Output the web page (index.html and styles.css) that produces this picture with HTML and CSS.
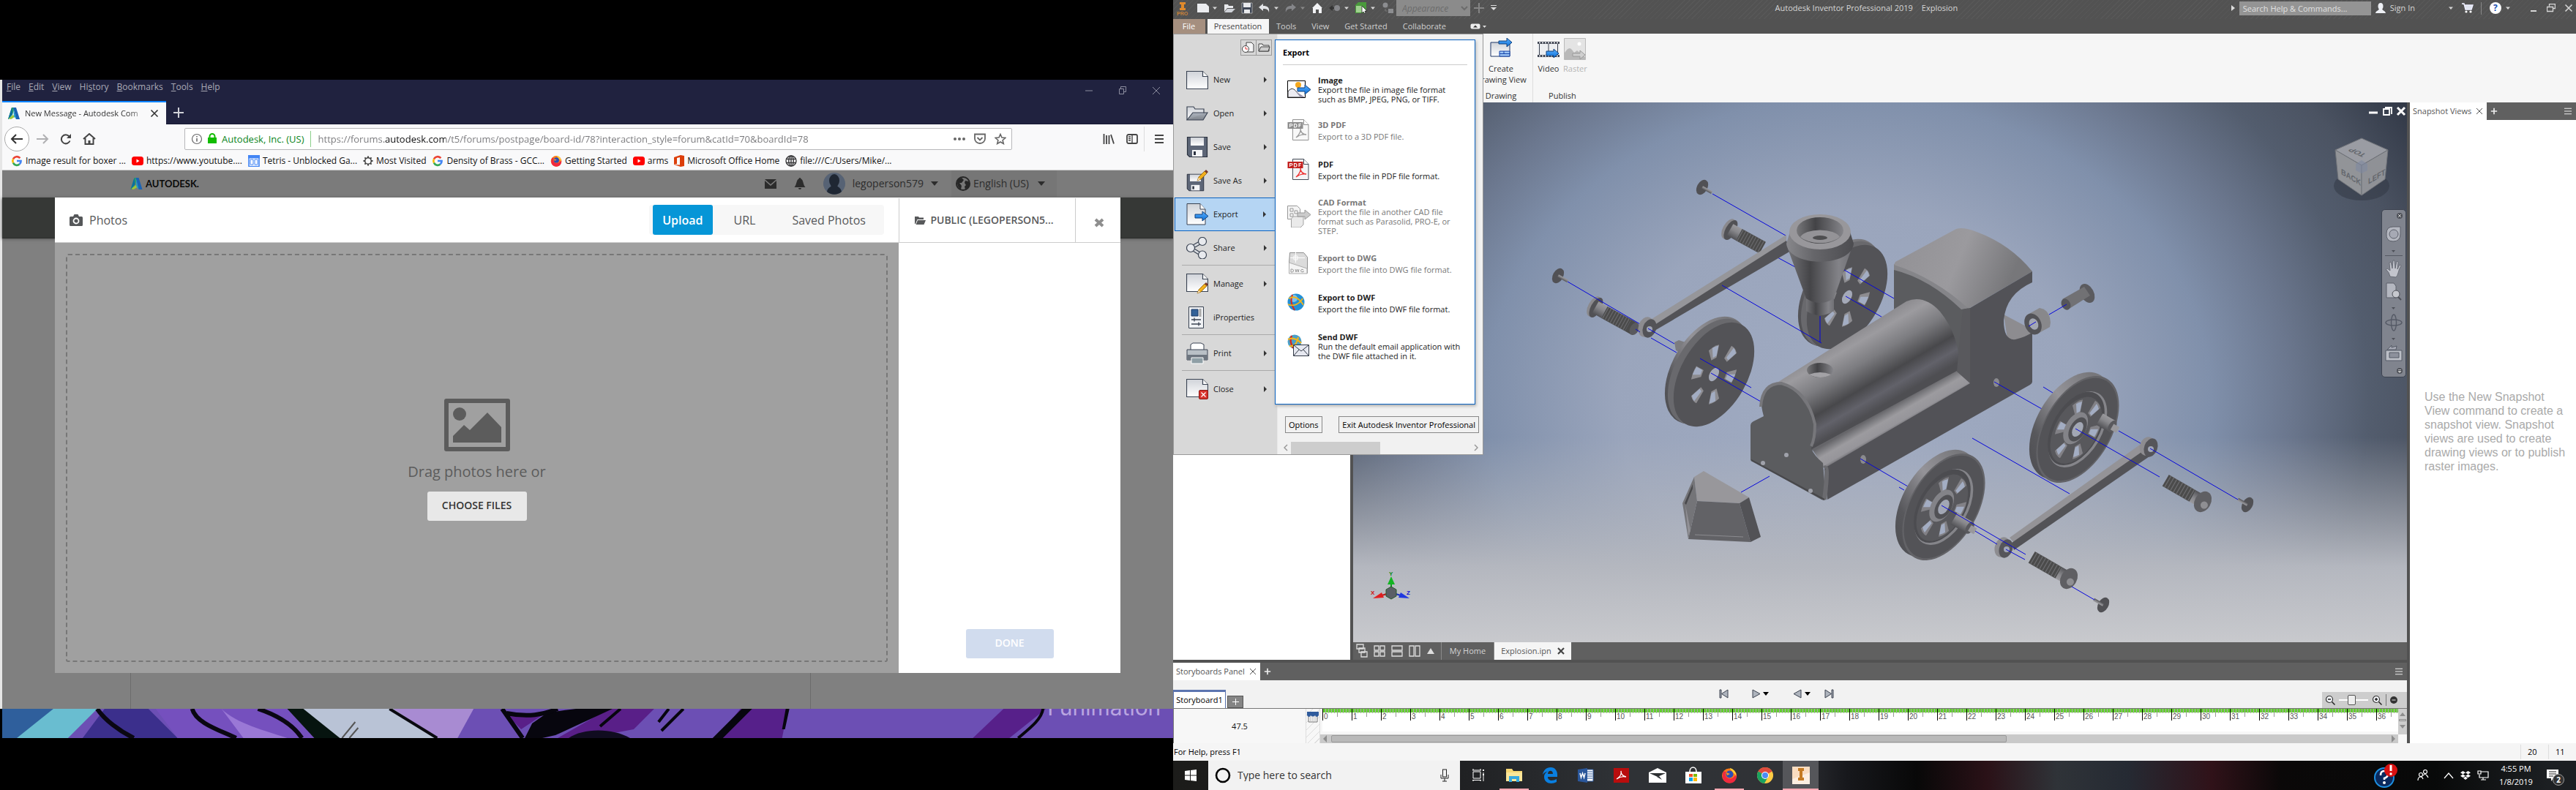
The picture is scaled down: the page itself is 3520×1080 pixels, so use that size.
FILE: index.html
```html
<!DOCTYPE html>
<html lang="en">
<head>
<meta charset="utf-8">
<title>Desktop</title>
<link rel="stylesheet" href="styles.css">
</head>
<body>
<svg class="defs" aria-hidden="true">
  <defs>
    <linearGradient id="paper" x1="0" y1="0" x2="0" y2="1"><stop offset="0" stop-color="#d0d3d9"/><stop offset="1" stop-color="#fff"/></linearGradient>
    <linearGradient id="steel" x1="0" y1="0" x2="0" y2="1"><stop offset="0" stop-color="#8e98a5"/><stop offset="1" stop-color="#4e5663"/></linearGradient>
    <linearGradient id="arrowblue" x1="0" y1="0" x2="0" y2="1"><stop offset="0" stop-color="#5bb0ff"/><stop offset="1" stop-color="#0a6fd8"/></linearGradient>
  </defs>
  <symbol id="a-logo" viewBox="0 0 16 16"><path d="M5 0h4l-3 10L1 16H0z" fill="#2a9a6a"/><path d="M0 16l5-16 1 9z" fill="#0a6f9f"/><path d="M1 15l6-5 2 3-5 3z" fill="#9cc63b"/><path d="M7 0h4l5 16h-5z" fill="#1a63b5"/><path d="M7 0l4 16-3-4z" fill="#17a2c9"/></symbol>
  <symbol id="g-logo" viewBox="0 0 16 16"><g fill="none" stroke-width="2.6"><path d="M12.4 4.2A5.6 5.6 0 0 0 3 5.4" stroke="#ea4335"/><path d="M3 5.3a5.6 5.6 0 0 0 0 5.4" stroke="#fbbc05"/><path d="M3 10.6a5.6 5.6 0 0 0 8.6 2" stroke="#34a853"/><path d="M11.5 12.6A5.6 5.6 0 0 0 13.6 8H8" stroke="#4285f4"/></g></symbol>
  <symbol id="yt" viewBox="0 0 16 16"><rect y="2" width="16" height="12" rx="3.5" fill="#f00"/><path d="M6.5 5.5v5l4-2.5z" fill="#fff"/></symbol>
  <symbol id="fox" viewBox="0 0 22 22"><circle cx="11" cy="11.500" r="10" fill="#ff7a18"/><path d="M3 6c-3 6-1 15 8 15.500s11-8 9.500-13C19 12 15 17 10 15c-5-2-5-7-3-9-2 0-3-1-4 0z" fill="#f0293f"/><circle cx="11.500" cy="9.500" r="5" fill="#2b4fb5"/><path d="M12 1c4 1 9 5 8.500 12C19 8 16 8 15 5c-1-1-3-2-3-4z" fill="#ffd43a"/><path d="M7 7l5 2-4 2z" fill="#ff9a1f"/></symbol>
  <symbol id="globe" viewBox="0 0 16 16"><g fill="none" stroke="#3a3a3c" stroke-width="1.4"><circle cx="8" cy="8" r="7"/><ellipse cx="8" cy="8" rx="3.300" ry="7"/><path d="M1.500 5.500h13M1.500 10.500h13M8 1v14"/></g></symbol>
  <symbol id="caret" viewBox="0 0 8 8"><path d="M1 2.500h6L4 6z" fill="currentColor"/></symbol>
  <symbol id="doc" viewBox="0 0 30 30"><path d="M0.500 3.500h22l7 7v17h-29z" fill="url(#paper)" stroke="#3a4352" stroke-width="1.200"/><path d="M22.500 3.500v7h7" fill="#fff" stroke="#3a4352" stroke-width="1.200"/></symbol>
  <symbol id="pagearrow" viewBox="0 0 30 30"><path d="M1 .5h18l7 7.500v21H1z" fill="url(#paper)" stroke="#3a4352"/><path d="M19 .5V8h7" fill="#fff" stroke="#3a4352"/><path d="M12 15h10v-4l8 6.500-8 6.500v-4H12z" fill="url(#arrowblue)" stroke="#10407c"/></symbol>
  <symbol id="folder" viewBox="0 0 30 30"><path d="M1 24V6h9l2 3h12v6" fill="url(#paper)" stroke="#3a4352" stroke-width="1.200"/><path d="M1 24l8-10h20l-6 10z" fill="url(#steel)" fill-opacity=".65" stroke="#3a4352" stroke-width="1.200"/></symbol>
  <symbol id="floppy" viewBox="0 0 30 30"><path d="M1.500 1.500h27v27h-24l-3-3z" fill="#5d6677" stroke="#2c3340" stroke-width="1.200"/><path d="M6 2h18v11H6z" fill="url(#paper)"/><path d="M8 19h14v9H8z" fill="#f4f5f7"/><path d="M10 21h3v5h-3z" fill="#2c3340"/></symbol>
  <symbol id="pencil" viewBox="0 0 16 16"><path d="M1 15l2-5 8-8 3 3-8 8z" fill="#f2b01e" stroke="#8a5a00" stroke-width=".8"/><path d="M11 2l2-2 3 3-2 2z" fill="#7a3a2a"/><path d="M1 15l2-4 2 2z" fill="#f7e4c8"/></symbol>
  <symbol id="winrestore" viewBox="0 0 12 12"><path d="M3.500 3.500v-3h8v6h-3M.5 4.500h8v6h-8z" fill="none" stroke="currentColor" stroke-width="1.300"/></symbol>
  <symbol id="x" viewBox="0 0 12 12"><path d="M1.500 1.500l9 9M10.500 1.500l-9 9" fill="none" stroke="currentColor" stroke-width="1.600"/></symbol>
  <symbol id="burger" viewBox="0 0 12 12"><path d="M0 1.500h12M0 6h12M0 10.500h12" stroke="currentColor" stroke-width="1.200"/></symbol>
  <symbol id="plus" viewBox="0 0 12 12"><path d="M6 1v10M1 6h10" stroke="currentColor" stroke-width="2"/></symbol>
  <symbol id="pdf" viewBox="0 0 30 30"><path d="M7.500.5h15l6.500 7v21H7.500z" fill="#f4f4f5" stroke="#444c58"/><path d="M22.500.5v7H29" fill="#fff" stroke="#444c58"/><path d="M12 25c4-3 7-9 6-12 0 5 4 8 8 8-5-1-10 1-14 4z" fill="none" stroke="#e33" stroke-width="1.400"/><path d="M.5 4h21v9H.5z" fill="#c3201e"/><path d="M3.500 11V6.500h2q1.500 0 1.500 1.200T5.500 9h-2M9.500 6.500v4.500h1.500q2 0 2-2.200t-2-2.300zM16 11V6.500h3M16 8.700h2.500" fill="none" stroke="#fff" stroke-width="1.100"/></symbol>
</svg>

<main class="desktop">
<section class="screen-left">
  <div class="browser">
    <header class="chrome-top">
      <div class="menurow">
        <nav class="menubar"><a href="#"><u>F</u>ile</a><a href="#"><u>E</u>dit</a><a href="#"><u>V</u>iew</a><a href="#">Hi<u>s</u>tory</a><a href="#"><u>B</u>ookmarks</a><a href="#"><u>T</u>ools</a><a href="#"><u>H</u>elp</a></nav>
        <div class="winbtns">
          <button aria-label="Minimize"><svg width="12" height="12"><path d="M1 6h10" stroke="currentColor"/></svg></button>
          <button aria-label="Restore"><svg width="12" height="12"><path d="M3.500 3V.5h7v7H8M1.500 3.500h6v7h-6z" fill="none" stroke="currentColor"/></svg></button>
          <button aria-label="Close"><svg width="12" height="12"><path d="M1 1l10 10M11 1L1 11" stroke="currentColor"/></svg></button>
        </div>
      </div>
      <div class="tabrow">
        <div class="tab"><svg width="16" height="16"><use href="#a-logo"/></svg><span class="tab-title">New Message - Autodesk Com</span><button aria-label="Close tab"><svg width="12" height="12"><use href="#x"/></svg></button></div>
        <button class="newtab" aria-label="New tab"><svg width="16" height="16"><path d="M8 1v14M1 8h14" stroke="#d0d1d8" stroke-width="2"/></svg></button>
      </div>
    </header>
    <div class="toolbar">
      <button class="back" aria-label="Back"><svg width="18" height="16"><path d="M17 8H2M8 2L2 8l6 6" fill="none" stroke="#333" stroke-width="2"/></svg></button>
      <button aria-label="Forward"><svg width="18" height="16"><path d="M1 8h15M10 2l6 6-6 6" fill="none" stroke="#b0b0b2" stroke-width="2"/></svg></button>
      <button aria-label="Reload"><svg width="16" height="16"><path d="M13.500 10.500a6 6 0 1 1-1-6" fill="none" stroke="#444" stroke-width="2"/><path d="M15 1v6H9z" fill="#444"/></svg></button>
      <button aria-label="Home"><svg width="18" height="16"><path d="M1 8l8-7 8 7M3.500 7v8h11V7" fill="none" stroke="#444" stroke-width="2"/><path d="M7.500 10h3v5h-3z" fill="#444"/></svg></button>
      <label class="urlbar">
        <svg width="16" height="16"><circle cx="8" cy="8" r="6.500" fill="none" stroke="#6a6a6c" stroke-width="1.200"/><path d="M8 7v4.500M8 4v1.600" stroke="#6a6a6c" stroke-width="1.600"/></svg>
        <svg class="lock" width="12" height="16"><path d="M0 6h12v8H0z" fill="#12bc00"/><path d="M2.500 7V4.500a3.500 3.500 0 0 1 7 0V7" fill="none" stroke="#12bc00" stroke-width="2"/></svg>
        <span class="ident">Autodesk, Inc. (US)</span>
        <input class="url" aria-label="Address" value="https://forums.autodesk.com/t5/forums/postpage/board-id/78?interaction_style=forum&amp;catId=70&amp;boardId=78">
        <svg width="16" height="16"><g fill="#666"><circle cx="2" cy="8" r="2"/><circle cx="8" cy="8" r="2"/><circle cx="14" cy="8" r="2"/></g></svg>
        <svg width="16" height="16"><path d="M1 1.500h14v6a7 6.500 0 0 1-14 0z" fill="none" stroke="#666" stroke-width="1.800"/><path d="M4.500 6L8 9.500 11.500 6" fill="none" stroke="#666" stroke-width="1.800"/></svg>
        <svg width="16" height="16"><path d="M8 1.500l2 4.600 4.800.4-3.700 3.200 1.200 4.800L8 12l-4.300 2.500 1.200-4.800L1.200 6.500 6 6.100z" fill="none" stroke="#666" stroke-width="1.600"/></svg>
      </label>
      <div class="toolend">
        <button aria-label="Library"><svg width="16" height="14"><path d="M1.500 0v14M5 2v12M8.500 2v12M11 1l4 12.500" stroke="#444" stroke-width="1.800"/></svg></button>
        <button aria-label="Sidebars"><svg width="16" height="14"><rect x="1" y="1" width="14" height="12" rx="2" fill="none" stroke="#444" stroke-width="1.800"/><path d="M8 1v12M3 4h3M3 6.500h3M3 9h3" stroke="#444" stroke-width="1.400"/></svg></button>
        <button class="hamb" aria-label="Menu"><svg width="12" height="12"><path d="M0 1h12M0 6h12M0 11h12" stroke="#444" stroke-width="2"/></svg></button>
      </div>
    </div>
    <nav class="bookmarks">
      <a href="#"><svg width="16" height="16"><use href="#g-logo"/></svg>Image result for boxer ...</a>
      <a href="#"><svg width="16" height="16"><use href="#yt"/></svg>https://www.youtube....</a>
      <a href="#"><svg width="16" height="16"><path d="M1 .5h14v15H1z" fill="#fff" stroke="#4285f4" stroke-width="1.600"/><path d="M0 0h16v4.500H0z" fill="#4285f4"/><path d="M3 6h4v7H3zM9 6h4v7H9z" fill="none" stroke="#4285f4"/></svg>Tetris - Unblocked Ga...</a>
      <a href="#"><svg width="14" height="16"><circle cx="7" cy="8" r="4.300" fill="none" stroke="#444" stroke-width="1.600"/><path d="M7 1.500v2M7 12.500v2M.5 8h2M11.500 8h2M2.400 3.400l1.500 1.500M10.100 11.100l1.500 1.500M11.600 3.400l-1.500 1.500M3.900 11.100l-1.500 1.500" stroke="#444" stroke-width="2"/></svg>Most Visited</a>
      <a href="#"><svg width="16" height="16"><use href="#g-logo"/></svg>Density of Brass - GCC...</a>
      <a href="#"><svg width="16" height="16"><use href="#fox"/></svg>Getting Started</a>
      <a href="#"><svg width="16" height="16"><use href="#yt"/></svg>arms</a>
      <a href="#"><svg width="14" height="16"><path d="M0 3l9-3 5 1v14l-5 1-9-3 8 .5V3L4 4v8l-4 1z" fill="#dc3e0a"/></svg>Microsoft Office Home</a>
      <a href="#"><svg width="16" height="16"><use href="#globe"/></svg>file:///C:/Users/Mike/...</a>
    </nav>
    <div class="page">
      <header class="site-head">
        <a class="brand" href="#"><svg width="17" height="16"><use href="#a-logo"/></svg><b>AUTODESK.</b></a>
        <div class="site-user">
          <svg width="16" height="14"><path d="M0 1h16L8 8z" fill="#2c2c2c"/><path d="M0 3l8 7 8-7v11H0z" fill="#2c2c2c"/></svg>
          <svg width="16" height="16"><path d="M8 0a1.500 1.500 0 0 1 1.500 1.500C13 3 12 9 15.500 13H.5C4 9 3 3 6.500 1.500A1.500 1.500 0 0 1 8 0zM6 14h4a2 2 0 0 1-4 0z" fill="#2c2c2c"/></svg>
          <a class="user" href="#"><svg width="30" height="30"><circle cx="15" cy="15" r="15" fill="#566274"/><ellipse cx="15" cy="11" rx="7" ry="9" fill="#1f2733"/><path d="M5 26c1-6 6-6 6-9h8c0 3 5 3 6 9a15 15 0 0 1-20 0z" fill="#1f2733"/></svg>legoperson579<svg class="tri" width="10" height="8"><path d="M0 1h10L5 7z" fill="#2c2c2c"/></svg></a>
          <a class="lang" href="#"><svg width="20" height="20"><circle cx="10" cy="10" r="9" fill="none" stroke="#262626" stroke-width="2"/><path d="M3 4l5-2 3 3-3 4H5l3 4-1 5C2 15 1 9 3 4zM13 6l5 1v7l-5 4-1-4 2-2-2-3z" fill="#262626"/></svg>English (US)<svg class="tri" width="10" height="8"><path d="M0 1h10L5 7z" fill="#2c2c2c"/></svg></a>
        </div>
      </header>
      <div class="site-band"></div>
      <div class="site-body"></div>
      <div class="modal" role="dialog" aria-label="Photos">
        <header class="modal-head">
          <h2><svg width="18" height="16"><path d="M1.500 3H5l1.500-3h5L13 3h3.500A1.500 1.500 0 0 1 18 4.500v10a1.500 1.500 0 0 1-1.500 1.500h-15A1.500 1.500 0 0 1 0 14.500v-10A1.500 1.500 0 0 1 1.500 3z" fill="#555759"/><circle cx="9" cy="9" r="3.500" fill="none" stroke="#fff" stroke-width="1.800"/></svg>Photos</h2>
          <div class="modetabs"><button class="on">Upload</button><button>URL</button><button>Saved Photos</button></div>
          <button class="album"><svg width="15" height="12"><path d="M0 11V1h5l1 1.500h6V5H3.500L1 11zM1.500 12l2.500-6h11l-2.500 6z" fill="#58595b"/></svg>PUBLIC (LEGOPERSON5...</button>
          <button class="close" aria-label="Close"><svg width="14" height="13"><path d="M2 2l10 9M12 2L2 11" stroke="#8e8e8e" stroke-width="4"/></svg></button>
        </header>
        <div class="modal-main">
          <div class="dropwrap"><div class="dropzone">
            <svg width="90" height="72"><path d="M3 3h84v66H3z" fill="none" stroke="#5c5c5c" stroke-width="6" stroke-linejoin="round"/><circle cx="21" cy="21" r="9" fill="#5c5c5c"/><path d="M12 60V51l15-15 8 7 24-24 19 20v21z" fill="#5c5c5c"/></svg>
            <p>Drag photos here or</p>
            <button class="choose">CHOOSE FILES</button>
          </div></div>
          <aside class="modal-side"><button class="done">DONE</button></aside>
        </div>
      </div>
    </div>
  </div>
  <svg class="wallpaper" viewBox="0 0 1602 40" preserveAspectRatio="none">
    <rect width="1602" height="40" fill="#6c4fb4"/>
    <path d="M0 0h110l-40 40H0z" fill="#2f5f9c"/><path d="M20 40L70 0h60L90 40z" fill="#69bdd0"/><path d="M140 0h60l40 40h-130z" fill="#3b2f8c"/>
    <path d="M210 0h250l30 40H240z" fill="#7550be"/><path d="M300 0c20 20 60 30 90 40h-60z" fill="#9a78d6"/>
    <path d="M130 0c10 15 30 30 50 40M260 0c5 20 40 30 60 40M350 0c30 10 50 25 60 40" fill="none" stroke="#0a0712" stroke-width="6"/>
    <path d="M400 0h145l50 40H455z" fill="#b9c3d6"/><path d="M390 0h22l50 40h-35z" fill="#06140f"/><path d="M535 0h110l-22 40h-28z" fill="#a88bd2"/><path d="M530 0l65 40" stroke="#0a0a10" stroke-width="4"/><path d="M465 40l18-22M475 40l12-14" stroke="#555" stroke-width="2"/>
    <path d="M830 0h62l-28 28-64 12h-40z" fill="#591f88"/><path d="M690 8q20 4 50 0l-30 20z" fill="#591f88"/><path d="M745 6q20-4 40-6h50l-78 36-18 4h-24l10-20z" fill="#07060e"/><path d="M684 0l28 40M690 6c30 6 50 2 70-6" fill="none" stroke="#07060e" stroke-width="6"/><path d="M775 40c20-14 60-14 84 0z" fill="#100c20"/><path d="M846 0l-28 24M912 0l-14 18M932 0l-30 30" stroke="#07060e" stroke-width="4"/>
    <path d="M1010 0h65l-8 40h-90z" fill="#56208a"/><path d="M1012 0l-40 40h14L1026 0zM1072 0h5l-6 28h-4z" fill="#07060e"/><path d="M1370 0h58l-50 40h-50z" fill="#57208a"/><path d="M1424 0c-2 15-20 28-34 40" fill="none" stroke="#07060e" stroke-width="4"/>
    <text x="1430" y="9" class="wallmark">Funimation</text>
  </svg>
</section>

<section class="inventor">
  <header class="titlebar">
    <div class="qat">
      <button class="q logo" aria-label="Inventor"><svg width="16" height="24"><path d="M4 4h8v3h-2v5h2v3H4v-3h2V7H4z" fill="#e08a2c"/></svg><span>PRO</span></button>
      <button class="q more" aria-label="New"><svg width="16" height="16"><path d="M0 2h12l4 4v8H0z" fill="#ebecef"/></svg><svg width="8" height="8"><use href="#caret"/></svg></button>
      <button class="q" aria-label="Open"><svg width="16" height="16"><path d="M1 13V3h5l1 2h6v3H5z" fill="#e8e9ec"/><path d="M1 14l4-5h11l-5 5z" fill="#cfd2d8"/></svg></button>
      <button class="q" aria-label="Save"><svg width="16" height="16"><path d="M1 1h14v14H1z" fill="#3f4654" stroke="#ddd" stroke-width=".6"/><path d="M3 1h10v6H3zM4 10h8v5H4z" fill="#e8e9ec"/></svg></button>
      <button class="q more" aria-label="Undo"><svg width="16" height="16"><path d="M0 7l6-5v3c6 0 9 2 8 9-1-4-3-5-8-5v3z" fill="#e4e5e8"/></svg><svg width="8" height="8"><use href="#caret"/></svg></button>
      <button class="q more dim" aria-label="Redo"><svg width="16" height="16"><path d="M15 7L9 2v3C3 5 0 7 1 14c1-4 3-5 8-5v3z" fill="#85868a"/></svg><svg width="8" height="8"><use href="#caret"/></svg></button>
      <button class="q" aria-label="Home"><svg width="16" height="16"><path d="M8 1l7 7h-1v7h-4v-5H6v5H2V8H1z" fill="#f2f3f5"/></svg></button>
      <button class="q more" aria-label="Return"><svg width="16" height="16"><path d="M0 8l5-4v3h3v2H5v3z" fill="#333"/><circle cx="11" cy="8" r="4" fill="#85868a"/></svg><svg width="8" height="8"><use href="#caret"/></svg></button>
      <button class="q more" aria-label="Select"><svg width="16" height="16"><path d="M0 4l4-4h11v11l-4 4H0z" fill="#4a9a3c"/><path d="M1 5h9v9H1z" fill="#9fd08f"/><path d="M9 5v10l2-2 2 3 1-1-1-3h3z" fill="#fff" stroke="#111" stroke-width=".7"/></svg><svg width="8" height="8"><use href="#caret"/></svg></button>
      <button class="q last" aria-label="Components"><svg width="16" height="16"><circle cx="5" cy="4" r="3.500" fill="#8c8d90"/><path d="M9 9h7v6H9z" fill="#8c8d90"/><path d="M5 9v3h3" fill="none" stroke="#777"/></svg></button>
      <select class="appearance" aria-label="Appearance" disabled><option>Appearance</option></select>
      <button class="q plus" aria-label="Add"><svg width="16" height="16"><path d="M8 1v14M1 8h14" stroke="#858585" stroke-width="2"/></svg></button>
      <button class="q cust" aria-label="Customize"><svg width="10" height="10"><path d="M1 1.500h8" stroke="#ddd"/><path d="M1 4h8L5 8z" fill="#ddd"/></svg></button>
    </div>
    <div class="doc-title"><span>Autodesk Inventor Professional 2019</span><span>Explosion</span></div>
    <div class="infocenter">
      <svg width="6" height="8"><path d="M0 0l5 4-5 4z" fill="#ddd"/></svg>
      <input aria-label="Search" placeholder="Search Help &amp; Commands...">
      <a class="signin" href="#"><svg width="16" height="16"><ellipse cx="8" cy="5.500" rx="3.500" ry="4.500" fill="#eef0f5"/><path d="M1 15c1-4 4-3 5-6h4c1 3 4 2 5 6z" fill="#eef0f5"/></svg>Sign In</a>
      <svg class="signcaret" width="8" height="8"><use href="#caret"/></svg>
      <button aria-label="Store"><svg width="16" height="16"><path d="M0 2h3l2 8h8l2-6H4" fill="#dfe3ee" stroke="#eef" stroke-width="1.400"/><circle cx="6" cy="13" r="1.600" fill="#fff"/><circle cx="12" cy="13" r="1.600" fill="#fff"/></svg></button>
      <i class="vsep"></i>
      <button class="helpq" aria-label="Help">?</button>
      <svg width="8" height="8"><use href="#caret"/></svg>
      <div class="appwin">
        <button aria-label="Minimize"><svg width="12" height="12"><path d="M2 10h8" stroke="currentColor" stroke-width="2"/></svg></button>
        <button aria-label="Restore"><svg width="12" height="12"><use href="#winrestore"/></svg></button>
        <button aria-label="Close"><svg width="12" height="12"><use href="#x"/></svg></button>
      </div>
    </div>
  </header>
  <nav class="ribbontabs">
    <button class="file">File</button><button class="on">Presentation</button><button>Tools</button><button>View</button><button>Get Started</button><button>Collaborate</button>
    <button class="mini" aria-label="Ribbon state"><svg width="22" height="10"><rect x=".5" y="1.500" width="13" height="7" rx="2" fill="#eee"/><path d="M4 6.500h6L7 3.500z" fill="#333"/><path d="M17 4h5l-2.500 3z" fill="#ddd"/></svg></button>
  </nav>
  <div class="ribbon">
    <div class="group draw">
      <div class="tools"><button><svg width="30" height="30"><path d="M1 6h26v19H1z" fill="url(#paper)" stroke="#1d3566"/><path d="M13 18h14v7H13zM13 21.500h14M19 18v3.500" fill="#9cc4f5" stroke="#1240a8"/><path d="M12 4h11V0l7 6-7 6V8H12z" fill="url(#arrowblue)" stroke="#10407c"/></svg><span>Create<br>Drawing View</span></button></div>
      <h3>Drawing</h3>
    </div>
    <div class="group publish">
      <div class="tools"><button><svg width="30" height="30"><path d="M0 5h30v21H0z" fill="#3c4250"/><path d="M0 8h30v15H0z" fill="#eceef1"/><path d="M15 8v15M2.500 8v15M27.500 8v15" stroke="#3c4250"/><path d="M2 6.500h26M2 24.500h26" stroke="#fff" stroke-width="1.500" stroke-dasharray="2 2"/><path d="M12 18h10v-3l7 6-7 6v-3H12z" fill="url(#arrowblue)" stroke="#10407c"/></svg><span>Video</span></button>
      <button disabled><svg width="30" height="30"><path d="M.5.5h29v29H.5z" fill="#e4e4e4" stroke="#bbb"/><path d="M1 20c4-6 7-8 10-4l3 4 4-3 11 9v3H1z" fill="#b9b9b9"/><circle cx="21" cy="8" r="2.500" fill="#fff"/><path d="M12 21h10v-4l7 6-7 6v-4H12z" fill="#d0d0d0" stroke="#999"/></svg><span>Raster</span></button></div>
      <h3>Publish</h3>
    </div>
  </div>

  <div class="work">
    <div class="docks">
      <div class="upper">
        <aside class="browserpanel"></aside>
        <div class="docarea">
          <div class="viewport">
            <svg class="model" viewBox="1849 140 1440 738" preserveAspectRatio="xMidYMid meet">
              <defs>
                <linearGradient id="boiler" gradientUnits="userSpaceOnUse" x1="2518" y1="462" x2="2572" y2="555"><stop offset="0" stop-color="#8c8b8f"/><stop offset=".15" stop-color="#9c9b9f"/><stop offset=".4" stop-color="#7c7c80"/><stop offset=".68" stop-color="#48484b"/><stop offset=".85" stop-color="#62626a"/><stop offset="1" stop-color="#4e4e52"/></linearGradient>
                <linearGradient id="ledge" gradientUnits="userSpaceOnUse" x1="2580" y1="558" x2="2596" y2="586"><stop offset="0" stop-color="#66666a"/><stop offset=".4" stop-color="#9c9b9f"/><stop offset=".75" stop-color="#96959a"/><stop offset="1" stop-color="#57575b"/></linearGradient>
                <linearGradient id="roof" gradientUnits="userSpaceOnUse" x1="2600" y1="340" x2="2740" y2="400"><stop offset="0" stop-color="#939296"/><stop offset=".5" stop-color="#9b9a9e"/><stop offset="1" stop-color="#77777a"/></linearGradient>
                <linearGradient id="cyl" x1="0" x2="1"><stop offset="0" stop-color="#737377"/><stop offset=".35" stop-color="#454548"/><stop offset=".8" stop-color="#838388"/><stop offset="1" stop-color="#717176"/></linearGradient>
                <linearGradient id="lip" x1="0" x2="1"><stop offset="0" stop-color="#88888c"/><stop offset=".4" stop-color="#66666a"/><stop offset="1" stop-color="#4c4c50"/></linearGradient>
                <linearGradient id="bore" x1="0" x2="1"><stop offset="0" stop-color="#77777a"/><stop offset=".4" stop-color="#434346"/><stop offset="1" stop-color="#85858a"/></linearGradient>
                <linearGradient id="rim" x1="0" y1="1" x2=".3" y2="0"><stop offset="0" stop-color="#4c4c50"/><stop offset=".3" stop-color="#58585c"/><stop offset=".65" stop-color="#949398"/><stop offset="1" stop-color="#77777b"/></linearGradient>
                <linearGradient id="shaft" x1="0" y1="0" x2="0" y2="1"><stop offset="0" stop-color="#9a999d"/><stop offset=".4" stop-color="#88888c"/><stop offset="1" stop-color="#515155"/></linearGradient>
                <path id="slot" d="M-5-26L5-26 10-45Q0-48-10-45z"/>
                <path id="sky" d="M-2-29L5-29 9-44Q3-46-3-46z"/>
                <g id="slots"><use href="#slot"/><use href="#slot" transform="rotate(60)"/><use href="#slot" transform="rotate(120)"/><use href="#slot" transform="rotate(180)"/><use href="#slot" transform="rotate(240)"/><use href="#slot" transform="rotate(300)"/></g>
                <g id="skies"><use href="#sky"/><use href="#sky" transform="rotate(60)"/><use href="#sky" transform="rotate(120)"/><use href="#sky" transform="rotate(180)"/><use href="#sky" transform="rotate(240)"/><use href="#sky" transform="rotate(300)"/></g>
                <g id="wheel">
                  <ellipse rx="47" ry="80" transform="translate(-5-3) rotate(30)" fill="url(#rim)"/>
                  <ellipse rx="46" ry="79" transform="translate(-2-1) rotate(30)" fill="#69696d"/>
                  <g transform="matrix(.707-.408 0 .816 5 3)">
                    <circle r="78" fill="#535357"/>
                    <use href="#slots" fill="#8d8c90"/><use href="#skies" fill="#a3adc3"/>
                    <circle r="10" fill="#a4a9b8"/>
                  </g>
                </g>
                <g id="wheelf">
                  <ellipse rx="47" ry="80" transform="translate(-5-3) rotate(30)" fill="url(#rim)"/>
                  <g transform="matrix(.707-.408 0 .816 4 2)">
                    <circle r="80" fill="#636367"/><circle r="77" fill="#535357"/>
                    <circle r="57" fill="#85858a"/><circle r="55" cx="-3" cy="-3" fill="#4c4c50"/><circle r="50" cx="-3" fill="#58585c"/>
                    <use href="#slots" fill="#828186"/><use href="#skies" fill="#a3adc3" transform="scale(.96)"/>
                    <circle r="24" cx="-4" cy="-4" fill="#838388"/><circle r="18" fill="#515155"/><circle r="11" fill="#a2a7b4"/>
                  </g>
                </g>
                <g id="thread"><path d="M0-9h14v18H0z" fill="url(#shaft)"/><path d="M14-9h37v18H14z" fill="#4b4b4b"/><path d="M16-9v18M20-9v18M24-9v18M28-9v18M32-9v18M36-9v18M40-9v18M44-9v18M48-9v18" stroke="#6a6a6d" stroke-width="1.200"/></g>
                <g id="pin"><ellipse rx="7" ry="11" fill="#515155"/><path d="M0-2h15v4H0z" fill="url(#shaft)"/></g>
              </defs>
              <g stroke="#0505dc" fill="none"><path d="M2340 265l100 57M2429 352l24 13"/></g>
              <use href="#wheel" transform="translate(2519 403)"/>
              <path d="M2520 369l68 39M2522 405l54 31" stroke="#0505dc" fill="none"/>
              <use href="#pin" transform="translate(2326 256) rotate(29)"/><use href="#pin" transform="translate(2129 377) rotate(29)"/>
              <g transform="translate(2364 314) rotate(29)"><ellipse rx="8" ry="15" cx="-2" fill="#8a898d"/><ellipse rx="7" ry="15" cx="1" fill="#515155"/><use href="#thread"/></g>
              <g transform="translate(2180 420) rotate(29)"><ellipse rx="8" ry="15" cx="-2" fill="#8a898d"/><ellipse rx="7" ry="15" cx="1" fill="#515155"/><use href="#thread"/><path d="M51-9h10v18H51z" fill="#4b4b4b"/><ellipse rx="6" ry="9" cx="61" fill="#5a5a5e"/></g>
              <path d="M2142 385l99 58" stroke="#0505dc"/>
              <path d="M2257 436L2441 321v11L2261 444z" fill="#96969a"/><path d="M2261 444L2441 329l6 14-186 109z" fill="#535357"/>
              <ellipse cx="2249" cy="447" rx="10" ry="14" transform="rotate(20 2249 447)" fill="#8d8c90"/><ellipse cx="2254" cy="449" rx="9" ry="13" transform="rotate(20 2254 449)" fill="#535357"/><circle cx="2254" cy="450" r="4" fill="#a0a6b6"/>
              <path d="M2288 468l6-3 12 4-8 14-8-4z" fill="#7c7c80"/>
              <use href="#wheel" transform="translate(2337 509)"/>
              <path d="M2252 449l36 21M2235 450l6 4M2256 462l35 20M2323 490l70 40M2338 510l68 39" stroke="#0505dc" fill="none"/>
              <path d="M2468 405h38v20q-19 12-38 0z" fill="url(#cyl)"/><path d="M2443 340h87l-24 68q-19 12-38 0z" fill="url(#cyl)"/>
              <path d="M2446 317l-5 16c3 33 89 33 92 0l-5-16z" fill="url(#lip)"/><ellipse cx="2487" cy="317" rx="42" ry="24" fill="#98979b"/><ellipse cx="2487" cy="315" rx="32" ry="18" fill="url(#bore)"/><path d="M2460 324a28 13 0 0 1 54 0 32 18 0 0 1-54 0z" fill="#949397"/><ellipse cx="2487" cy="325" rx="10" ry="3" fill="#4e4e50"/>
              <path d="M2353 390l136 79M2487 432v36" stroke="#0505dc" fill="none"/>
              <path d="M2588 365q44 8 104 56v110h-70l-34-90z" fill="#5b5c5f"/>
              <path d="M2588 361q44 12 104 60l-12 2q-44-42-92-54z" fill="#858589"/>
              <path d="M2590 358l83-45q10-3 28 4 46 17 76 54l-87 51q-46-42-102-60z" fill="url(#roof)"/>
              <path d="M2738 430l34 18 5 7-14 12-20-4z" fill="#8d8c90"/>
              <path d="M2406 552q2-24 24-30L2605 412q24-10 46 14 28 34 27 84l-194 108-60-20z" fill="url(#boiler)"/>
              <path d="M2476 614l198-107 20 18-197 121z" fill="url(#ledge)"/>
              <path d="M2674 508l18 16V421l-10 2q-6 60-8 85z" fill="#59595d"/>
              <path d="M2692 421l85-50v15q-36 16-39 52 0 28 16 26 16-4 23-10v68q0 2-3 4L2497 683l-4-43 199-116z" fill="#525257"/>
              <path d="M2392 629v-47q0-4 4-6l14-7q-8-28 4-38 24-16 48 14 26 38 13 68 4 10 16 20l4 50q-3 1-6 0z" fill="#5b5c5f"/>
              <path d="M2406 556q2-32 28-32 36 10 46 56 0 20-5 30" fill="none" stroke="#77777b" stroke-width="4"/>
              <path d="M2493 640q6-6 0 43" stroke="#6b6b6f" stroke-width="6" fill="none"/>
              <path d="M2393 629l100 54" stroke="#48484b" stroke-width="2"/>
              <ellipse cx="2487" cy="506" rx="18" ry="10" fill="url(#bore)"/><path d="M2472 512q15-6 30 0-14 8-30 0z" fill="#a3a2a6"/>
              <g fill="#a0a2ab"><circle cx="2441" cy="622" r="3"/><circle cx="2409" cy="633" r="3"/><circle cx="2474" cy="671" r="3"/></g><ellipse cx="2546" cy="628" rx="4" ry="6" fill="#8a8a8e"/><ellipse cx="2728" cy="523" rx="4" ry="6" fill="#8a8a8e"/>
              <path d="M2769 431l18-10q14 2 15 20l-1 6-18 10z" fill="#88888b"/><ellipse cx="2778" cy="443" rx="11" ry="15" transform="rotate(-25 2778 443)" fill="#535357"/><ellipse cx="2779" cy="443" rx="6" ry="8" transform="rotate(-25 2779 443)" fill="#a3a7b3"/>
              <ellipse cx="2852" cy="401" rx="9" ry="14" transform="rotate(-28 2852 401)" fill="#5b5b5f"/><path d="M2818 409l30-17 8 12-30 19z" fill="#717174"/><ellipse cx="2823" cy="416" rx="6" ry="8" transform="rotate(-28 2823 416)" fill="#55555a"/>
              <path d="M2772 446l10-6M2800 430l24-14M2379 673l39-22M2542 627l65 38M2725 522l65 37M2792 529l13 8M2595 666l7 4M2695 599l133 76" stroke="#0505dc" fill="none"/>
              <path d="M2328 644l62 36-13 8-58-3-4-33z" fill="#98979b"/><path d="M2319 685l58 3 15 53-85-4z" fill="#626266"/><path d="M2377 688l13-8 16 54-14 7z" fill="#525256"/><path d="M2315 652l4 33-12 52-8-49z" fill="#747478"/><path d="M2313 662l-11 26 2 2 9-22z" fill="#48484b"/><path d="M2303 690l7 35-3 8z" fill="#929196"/><path d="M2316 731l66 3" stroke="#8b8b8f"/>
              <use href="#wheelf" transform="translate(2652 691)"/><use href="#wheelf" transform="translate(2835 585)"/>
              <g transform="translate(2670 709) rotate(30)"><path d="M0-9h25v18H0z" fill="url(#shaft)"/><ellipse cx="25" rx="5" ry="9" fill="#59595d"/><path d="M25-4h9v9h-9z" fill="#99989c"/></g>
              <g transform="translate(2869 573) rotate(30)"><path d="M0-9h20v18H0z" fill="url(#shaft)"/><ellipse cx="20" rx="5" ry="9" fill="#59595d"/><path d="M20-4h9v9h-9z" fill="#99989c"/></g>
              <path d="M2924 608L2746 735l6 7 182-128z" fill="#949397"/><path d="M2932 614L2749 742l3 10 185-128z" fill="#535357"/>
              <ellipse cx="2934" cy="610" rx="10" ry="13" transform="rotate(20 2934 610)" fill="#8d8c90"/><ellipse cx="2939" cy="612" rx="9" ry="13" transform="rotate(20 2939 612)" fill="#55555a"/><circle cx="2939" cy="614" r="4" fill="#a0a6b6"/>
              <ellipse cx="2736" cy="748" rx="10" ry="14" transform="rotate(20 2736 748)" fill="#8d8c90"/><ellipse cx="2741" cy="750" rx="9" ry="13" transform="rotate(20 2741 750)" fill="#55555a"/><circle cx="2742" cy="751" r="4" fill="#a0a6b6"/>
              <g transform="translate(3010 686) rotate(210)"><use href="#thread" transform="scale(1.150 1)"/><ellipse rx="11" ry="15" fill="#5f5f63"/><circle cx="-4" cy="-3" r="5" fill="#8f8f93"/></g>
              <g transform="translate(2827 791) rotate(210)"><use href="#thread" transform="scale(1.150 1)"/><ellipse rx="11" ry="15" fill="#5f5f63"/><circle cx="-4" cy="-3" r="5" fill="#8f8f93"/></g>
              <use href="#pin" transform="translate(3071 690) rotate(210)"/><use href="#pin" transform="translate(2874 827) rotate(210)"/>
              <path d="M2836 586l115 66M2895 589l30 17M2938 613l120 70M2653 691l115 67M2699 726l30 18M2741 751l26 14M2831 802l31 18" stroke="#0505dc" fill="none"/>
              <ellipse cx="3227" cy="254" rx="38" ry="20" fill="#2f3542" opacity=".5"/>
              <g stroke="#6f7278"><path d="M3227 189l36 16-36 21-36-21z" fill="#9a9ca3"/><path d="M3191 205l36 21v41l-32-22z" fill="#929498"/><path d="M3263 205l-36 21v41l32-22z" fill="#8f9196"/></g>
              <path d="M3227 219l8 5v9l-8 4-8-4v-9z" fill="#7f88a0" opacity=".6"/>
              <g class="cubetext"><text transform="matrix(.85 .5 0 1 3199 238)">BACK</text><text transform="matrix(.85-.5 0 1 3236 252)">LEFT</text><text transform="matrix(-.9-.4 .8-.5 3234 211)">TOP</text></g>
              <g><path d="M1901 808v-12" stroke="#0a9a1a" stroke-width="2"/><path d="M1896 799l5-11 5 11z" fill="#12b422"/><path d="M1901 810l-16 5" stroke="#c01818" stroke-width="2"/><path d="M1876 818l12-8 3 7z" fill="#e02020"/><path d="M1901 810l16 5" stroke="#1a2fc0" stroke-width="2"/><path d="M1926 818l-12-8-3 7z" fill="#2038e0"/><path d="M1894 806l7-4 7 4v9l-7 4-7-4z" fill="#5a5f66" stroke="#2b5a2d"/></g>
              <g class="axistext"><text x="1873" y="813" fill="#d01010">X</text><text x="1898" y="787" fill="#0a8a1a">Y</text><text x="1922" y="813" fill="#1010d0">Z</text></g>
            </svg>
            <div class="viewwin">
              <button aria-label="Minimize view"><svg width="14" height="14"><path d="M1 9h12" stroke="#fff" stroke-width="3"/></svg></button>
              <button aria-label="Restore view"><svg width="14" height="14"><path d="M4 2h9v9M2 4h8v8H2z" fill="none" stroke="#fff" stroke-width="1.800"/></svg></button>
              <button aria-label="Close view"><svg width="14" height="14"><path d="M2 2l10 10M12 2L2 12" stroke="#fff" stroke-width="3"/></svg></button>
            </div>
            <div class="navbar">
              <svg width="30" height="224" viewBox="0 0 30 224">
                <circle cx="23" cy="6" r="4" fill="#4d5058"/><path d="M21 4l4 4M25 4l-4 4" stroke="#ccc"/>
                <path d="M5 30q0-9 9-9h10v10q0 10-10 10T5 30z" fill="#b4b7c0" stroke="#5c606a"/><circle cx="15" cy="31" r="6" fill="#a6a9b4" stroke="#5c606a"/><path d="M12 53h5l-2.500 3z" fill="#4d5058"/><path d="M3 60.500h24" stroke="#555963"/>
                <path d="M10 89q-1-6-6-10 2-2 6 2l-1-11 2-1 2 9 1-11 2 0 1 11 2-10 2 1-1 10 3-6 2 1q-3 5-4 10-1 4-3 6z" fill="#c2c4cc" stroke="#5c606a" stroke-width=".8"/>
                <path d="M5 98h10l3 4v16H5z" fill="#b4b7c0" stroke="#5c606a"/><circle cx="18" cy="113" r="5" fill="#c6c8ce" stroke="#4d5058"/><path d="M21 117l4 4" stroke="#4d5058" stroke-width="2"/><path d="M12 131h5l-2.500 3z" fill="#4d5058"/>
                <ellipse cx="15" cy="152" rx="11" ry="4" fill="none" stroke="#555a66" stroke-width="1.400"/><ellipse cx="15" cy="152" rx="3.500" ry="11" fill="none" stroke="#555a66" stroke-width="1.400"/><path d="M12 173h5l-2.500 3z" fill="#4d5058"/>
                <path d="M4 190h22v14H4z" fill="#bbbec6" stroke="#555a66"/><path d="M9 193h13v7H9z" fill="#8d919c" stroke="#555a66"/><path d="M6 189l6-6v3l7-2-1 5z" fill="#a6a9b4" stroke="#555a66"/>
                <circle cx="23" cy="218" r="4" fill="#4d5058"/><path d="M21 216.500h4M21 218.500h4l-2 2z" stroke="#ccc" fill="#ccc" stroke-width=".8"/>
              </svg>
            </div>
          </div>
          <div class="doctabs">
            <button aria-label="Cascade"><svg width="16" height="20"><path d="M1 1h9v6H1zM4 6h8v6H4zM7 11h8v7H7z" fill="#606060" stroke="#ddd" stroke-width="1.300"/></svg></button>
            <button aria-label="Tile"><svg width="16" height="16"><path d="M1 1h6v6H1zM9 1h6v6H9zM1 9h6v6H1zM9 9h6v6H9z" fill="none" stroke="#ddd" stroke-width="1.300"/></svg></button>
            <button aria-label="Rows"><svg width="16" height="16"><path d="M1 1h14v6H1zM1 9h14v6H1z" fill="none" stroke="#ddd" stroke-width="1.300"/></svg></button>
            <button aria-label="Columns"><svg width="16" height="16"><path d="M1 1h6v14H1zM9 1h6v14H9z" fill="none" stroke="#ddd" stroke-width="1.300"/></svg></button>
            <button class="up" aria-label="More"><svg width="12" height="10"><path d="M1 9h10L6 1z" fill="#ddd"/></svg></button>
            <button class="dt">My Home</button><button class="dt on">Explosion.ipn<svg width="10" height="10"><path d="M1 1l8 8M9 1L1 9" stroke="#444" stroke-width="2.200"/></svg></button>
          </div>
        </div>
      </div>
      <div class="story">
        <div class="panelbar"><button class="ptab">Storyboards Panel<svg width="12" height="12"><path d="M2 2l8 8M10 2L2 10" stroke="#555"/></svg></button><button class="padd" aria-label="Add panel"><svg width="10" height="10" viewBox="0 0 12 12"><use href="#plus"/></svg></button><button class="pmenu" aria-label="Panel menu"><svg width="12" height="10" viewBox="0 0 12 12"><use href="#burger"/></svg></button></div>
        <div class="player">
          <div class="sbtabs"><button class="sb">Storyboard1</button><button class="sbadd" aria-label="Add storyboard"><svg width="9" height="9"><path d="M4.500 0v9M0 4.500h9" stroke="#fff"/></svg></button></div>
          <div class="transport">
            <button aria-label="To start"><svg width="13" height="13"><path d="M1 1h2v11H1zM12 1v11L3.500 6.500z" fill="#aeb4bd" stroke="#3c4350"/></svg></button>
            <button aria-label="Play"><svg width="24" height="13"><path d="M1 1v11l10-5.500z" fill="#aeb4bd" stroke="#3c4350"/><path d="M15 4h8l-4 5z"/></svg></button>
            <button aria-label="Play reverse"><svg width="25" height="13"><path d="M11 1v11L1 6.500z" fill="#aeb4bd" stroke="#3c4350"/><path d="M16 4h8l-4 5z"/></svg></button>
            <button class="end" aria-label="To end"><svg width="13" height="13"><path d="M10 1h2v11h-2zM1 1v11l8.500-5.500z" fill="#aeb4bd" stroke="#3c4350"/></svg></button>
          </div>
          <div class="zoomer">
            <svg width="14" height="14"><circle cx="6" cy="6" r="4.500" fill="#f2f4f8" stroke="#333" stroke-width="1.200"/><path d="M4 6h4M9.500 9.500l4 4" stroke="#222" stroke-width="1.500"/></svg>
            <input type="range" aria-label="Zoom" min="0" max="100" value="42">
            <svg width="14" height="14"><circle cx="6" cy="6" r="4.500" fill="#f2f4f8" stroke="#333" stroke-width="1.200"/><path d="M4 6h4M6 4v4M9.500 9.500l4 4" stroke="#222" stroke-width="1.500"/></svg>
            <i></i>
            <svg width="10" height="10"><circle cx="5" cy="5" r="5" fill="#333"/><path d="M2.500 5h5" stroke="#aaa" stroke-width="1.500"/></svg>
          </div>
        </div>
        <div class="timeline">
          <div class="timeval">47.5</div>
          <div class="hatch"><svg width="16" height="16"><path d="M2 5h12v10H2z" fill="#f4f4f4" stroke="#777"/><path d="M5 6v9M8 6v9M11 6v9" stroke="#bbb"/><path d="M0 1h16v5q-3 4-5 0-3 3-6 0-2 4-5 0z" fill="#2f5b9c"/></svg></div>
          <div class="track">
            <div class="ruler"><span>0</span><span>1</span><span>2</span><span>3</span><span>4</span><span>5</span><span>6</span><span>7</span><span>8</span><span>9</span><span>10</span><span>11</span><span>12</span><span>13</span><span>14</span><span>15</span><span>16</span><span>17</span><span>18</span><span>19</span><span>20</span><span>21</span><span>22</span><span>23</span><span>24</span><span>25</span><span>26</span><span>27</span><span>28</span><span>29</span><span>30</span><span>31</span><span>32</span><span>33</span><span>34</span><span>35</span><span>36</span></div>
            <div class="hscroll"><svg width="6" height="10"><path d="M5 0v10L0 5z" fill="#8d8d8d"/></svg><i></i><svg width="6" height="10"><path d="M1 0v10l5-5z" fill="#8d8d8d"/></svg></div>
          </div>
          <div class="vscroll"><svg width="12" height="35"><path d="M2 10h8L6 5zM2 22h8l-4 5z" fill="#8d8d8d"/><path d="M1.500 14.500h9v2h-9z" fill="#ccc" stroke="#8d8d8d"/></svg></div>
        </div>
      </div>
    </div>
    <aside class="snapshots">
      <div class="panelbar"><button class="ptab">Snapshot Views<svg width="12" height="12"><path d="M2 2l8 8M10 2L2 10" stroke="#555"/></svg></button><button class="padd" aria-label="Add view panel"><svg width="10" height="10" viewBox="0 0 12 12"><use href="#plus"/></svg></button><button class="pmenu" aria-label="Views menu"><svg width="12" height="10" viewBox="0 0 12 12"><use href="#burger"/></svg></button></div>
      <p>Use the New Snapshot<br>View command to create a<br>snapshot view. Snapshot<br>views are used to create<br>drawing views or to publish<br>raster images.</p>
    </aside>
  </div>
  <div class="status"><span>For Help, press F1</span><span class="num">20</span><span class="num">11</span></div>

  <footer class="taskbar">
    <button class="start" aria-label="Start"><svg width="16" height="16"><path d="M0 2l7-1v6.500H0zM8 1l8-1v7.500H8zM0 8.500h7V15l-7-1zM8 8.500h8V16l-8-1z" fill="#fff"/></svg></button>
    <label class="search"><svg width="22" height="22"><circle cx="11" cy="11" r="9" fill="none" stroke="#000" stroke-width="2.600"/></svg><input aria-label="Search Windows" placeholder="Type here to search"><svg width="12" height="18"><rect x="3.500" y="1" width="5" height="10" fill="none" stroke="#222"/><path d="M1 8v5h10V8M6 13v4M3 17h6" fill="none" stroke="#222"/></svg></label>
    <button class="app" aria-label="Task view"><svg width="18" height="18"><path d="M2 4h10v9H2zM2 2V0M12 2V0M2 15v2M12 15v2M1 2h12M1 15.500h12" fill="none" stroke="#fff"/><path d="M16 5v12" stroke="#fff"/><path d="M15 1h2v2h-2zM15 7h2v2h-2z" fill="#fff"/></svg></button>
    <button class="app open" aria-label="File Explorer"><svg width="22" height="20"><path d="M0 1h8l2 3h12v14H0z" fill="#f7d774"/><path d="M0 6h22v12H0z" fill="#fbe699"/><path d="M4 19v-8h14v8h-4v-4H8v4z" fill="#38a8e0"/></svg></button>
    <button class="app" aria-label="Edge"><svg width="22" height="22"><path d="M1 10C2 4 6 0 12 0c6 0 9 5 9 10v3H8c0 6 7 6 12 3v4c-7 4-17 2-17-7 0-4 3-7 6-8-3 1-6 2-8 5zm7-1h7c0-6-7-5-7 0z" fill="#0a7fe0"/></svg></button>
    <button class="app" aria-label="Word"><svg width="22" height="20"><path d="M12 2h9v16h-9z" fill="#fff" stroke="#2b579a"/><path d="M13 5h7M13 8h7M13 11h7M13 14h7" stroke="#2b579a"/><path d="M0 2l13-2v20L0 18z" fill="#2b579a"/><path d="M3 7l1.500 6L6.500 7l2 6L10 7" fill="none" stroke="#fff" stroke-width="1.500"/></svg></button>
    <button class="app" aria-label="Acrobat"><svg width="21" height="20"><path d="M0 0h21v20H0z" fill="#b90d0d"/><path d="M4 15c5-3 7-7 6-11 0 5 3 7 7 8-4-1-9 0-13 3z" fill="none" stroke="#fff" stroke-width="1.300"/></svg></button>
    <button class="app" aria-label="Mail"><svg width="24" height="20"><path d="M0 6l12-6 12 6v14H0z" fill="#fff"/><path d="M1 7h22l-11 5z" fill="#2b2e31"/><path d="M14 11l4 5-7-4z" fill="#2b2e31"/></svg></button>
    <button class="app" aria-label="Store"><svg width="24" height="24"><path d="M1 7h22v16H1z" fill="#fff"/><path d="M7 7c0-8 9-8 9 0" fill="none" stroke="#fff" stroke-width="1.600"/><path d="M6 10h5v4H6z" fill="#f25022"/><path d="M12 10h5v4h-5z" fill="#7fba00"/><path d="M6 15h5v5H6z" fill="#00a4ef"/><path d="M12 15h5v5h-5z" fill="#ffb900"/></svg></button>
    <button class="app open" aria-label="Firefox"><svg width="22" height="22"><use href="#fox"/></svg></button>
    <button class="app" aria-label="Chrome"><svg width="22" height="22"><circle cx="11" cy="11" r="11" fill="#fc4"/><path d="M11 11L1.500 5.500A11 11 0 0 1 20.500 5.500z" fill="#dd4b3e"/><path d="M11 11L1.500 5.500A11 11 0 0 0 10 22l5-9z" fill="#1aa260"/><path d="M1.500 5.500A11 11 0 0 1 20.500 6H11z" fill="#dd4b3e"/><circle cx="11" cy="11" r="5" fill="#fff"/><circle cx="11" cy="11" r="4" fill="#4c8bf5"/></svg></button>
    <button class="app open active" aria-label="Inventor"><svg width="24" height="24"><path d="M0 0h24v24H0z" fill="#f9dcc0"/><path d="M0 17L24 8v16H0z" fill="#fff" opacity=".5"/><path d="M8 2h8v4h-2v9h2v4H8v-4h2V6H8z" fill="#c47a22"/></svg></button>
    <div class="tray">
      <svg width="34" height="34"><circle cx="15" cy="20" r="13" fill="#0b2a5e" stroke="#1d8fe0" stroke-width="2"/><path d="M10 17q0-6 5-6t5 5q0 3-5 5v2" fill="none" stroke="#fff" stroke-width="2.600"/><circle cx="15" cy="27" r="2" fill="#fff"/><circle cx="24" cy="10" r="9" fill="#d91111"/><path d="M24 3v8" stroke="#fff" stroke-width="3"/><circle cx="24" cy="15" r="1.700" fill="#fff"/></svg>
      <svg width="16" height="16"><g fill="none" stroke="#fff" stroke-width="1.200"><circle cx="5" cy="7" r="2.500"/><path d="M1 15q0-5 4-5 2 0 3 3"/><circle cx="11" cy="3" r="2.500"/><path d="M8 8q3-3 5 0 1 1 2 3"/></g></svg>
      <svg width="14" height="10"><path d="M1 9l6-7 6 7" fill="none" stroke="#fff" stroke-width="1.300"/></svg>
      <svg width="14" height="12"><path d="M3.500 0L7 2.200 3.500 4.500 0 2.200zM10.500 0L14 2.200l-3.500 2.300L7 2.200zM3.500 4.500L7 6.700 3.500 9 0 6.700zM10.500 4.500L14 6.700 10.500 9 7 6.700zM7 7.700l3 2L7 12 4 9.700z" fill="#fff"/></svg>
      <svg width="16" height="14"><path d="M5 2h10v8H3V6M1 1h4v4H1zM8 10v3M5 13h7" fill="none" stroke="#fff" stroke-width="1.200"/></svg>
      <time>4:55 PM<br>1/8/2019</time>
      <div class="notif"><svg width="18" height="18"><path d="M0 1h16v12h-7l-3 4v-4H0z" fill="#fff"/><path d="M3 4h10M3 7h10M3 10h6" stroke="#222"/></svg><b>2</b></div>
    </div>
  </footer>

  <div class="appmenu">
    <nav class="appmenu-left">
      <div class="recent"><button aria-label="Recent"><svg width="20" height="20"><path d="M7 3h7l3 3v10H7z" fill="#f4f4f5" stroke="#444"/><circle cx="6" cy="12" r="4.500" fill="#fff" stroke="#444"/><path d="M6 9v3h3" stroke="#d33" fill="none"/></svg></button><button aria-label="Open documents"><svg width="20" height="20"><path d="M3 15V5h5l1 2h8v8z" fill="#eee" stroke="#444"/><path d="M3 15l3-6h12l-2 6z" fill="#ccc" stroke="#444"/></svg></button></div>
      <ul>
        <li><button><svg width="30" height="30"><use href="#doc"/></svg>New<i></i></button></li>
        <li><button><svg width="30" height="30"><use href="#folder"/></svg>Open<i></i></button></li>
        <li><button><svg width="30" height="30"><use href="#floppy"/></svg>Save<i></i></button></li>
        <li><button><svg width="30" height="30"><use href="#floppy" y="5" width="25" height="25"/><use href="#pencil" x="14" width="16" height="16"/></svg>Save As<i></i></button></li>
        <li class="on"><button><svg width="30" height="30"><use href="#pagearrow"/></svg>Export<i></i></button></li>
        <li><button><svg width="30" height="30"><g stroke="#3a4352" stroke-width="1.200" fill="#e8eaee"><path d="M6 15L22 6M6 15l16 10" stroke-width="5"/><path d="M6 15L22 6M6 15l16 10" stroke="#d8dbe0" stroke-width="2.600"/><circle cx="6" cy="15" r="5.500"/><circle cx="22" cy="6" r="5.500"/><circle cx="22" cy="24.500" r="5.500"/></g></svg>Share<i></i></button></li>
        <li class="rule"><button><svg width="30" height="30"><use href="#doc" y="-2"/><use href="#pencil" x="14" y="13" width="16" height="16"/></svg>Manage<i></i></button></li>
        <li><button><svg width="30" height="30"><path d="M3.500.5h20v29h-20z" fill="#f0f2f5" stroke="#3a4352"/><path d="M7 4h9v9H7z" fill="#336298" stroke="#1d3a66"/><path d="M19 3v11" stroke="#aaa" stroke-width="3"/><path d="M7 18h13M11 15.500v5M7 24h13M17 21.500v5" stroke="#3a4352" stroke-width="1.300"/></svg>iProperties</button></li>
        <li class="rule"><button><svg width="30" height="30"><path d="M6 11V3l3-2h11l4 2v8z" fill="#fff" stroke="#3a4352"/><path d="M1 10h28v14H1z" fill="#b9c0c6" stroke="#3a4352"/><path d="M1 17h28v7H1z" fill="#6d757f"/><path d="M7 21h16v8H7z" fill="#8f9fa6" stroke="#fff"/></svg>Print<i></i></button></li>
        <li class="rule"><button><svg width="30" height="30"><use href="#doc" y="-2"/><rect x="17.500" y="16.500" width="12" height="12" rx="1.500" fill="#d8352e" stroke="#8a1410"/><path d="M20.500 19.500l6 6M26.500 19.500l-6 6" stroke="#fff" stroke-width="1.300"/></svg>Close<i></i></button></li>
      </ul>
    </nav>
    <div class="appmenu-right">
      <div class="menu-actions"><button>Options</button><button>Exit Autodesk Inventor Professional</button></div>
      <div class="mscroll"><svg width="6" height="10"><path d="M5 1L1 5l4 4" fill="none" stroke="#999" stroke-width="1.500"/></svg><i></i><svg width="6" height="10"><path d="M1 1l4 4-4 4" fill="none" stroke="#999" stroke-width="1.500"/></svg></div>
    </div>
    <div class="submenu">
      <h2>Export</h2>
      <ul>
        <li class="r58"><svg width="32" height="30"><path d="M.5 3.500h24v23H.5z" fill="#fff" stroke="#000"/><circle cx="15" cy="9" r="4" fill="#f5a81c"/><path d="M1 18c5-6 8-4 12 1l6 7H1z" fill="#ececf2" stroke="#333"/><path d="M12 18l12 8h-6z" fill="#9a95ac"/><path d="M14 13h10V9l8 6.500-8 6.500v-4H14z" fill="url(#arrowblue)" stroke="#10407c"/></svg><p><b>Image</b>Export the file in image file format<br>such as BMP, JPEG, PNG, or TIFF.</p></li>
        <li class="off"><svg width="32" height="30"><use href="#pdf" width="30" height="30"/></svg><p><b>3D PDF</b>Export to a 3D PDF file.</p></li>
        <li><svg width="32" height="30"><use href="#pdf" width="30" height="30"/></svg><p><b>PDF</b>Export the file in PDF file format.</p></li>
        <li class="off r74"><svg width="32" height="30"><path d="M.5.500h13l4 4v14H.5z" fill="#eee" stroke="#555"/><path d="M4 4h4v4H4zM10 7h4v4h-4zM4 11h4v4H4z" fill="none" stroke="#555"/><path d="M5.500 18l3-3H22v11l-4 4H5.500z" fill="#ddd" stroke="#666"/><path d="M14 10h10V6l8 6.500-8 6.500v-4H14z" fill="#aaa" stroke="#555"/></svg><p><b>CAD Format</b>Export the file in another CAD file<br>format such as Parasolid, PRO-E, or<br>STEP.</p></li>
        <li class="off"><svg width="32" height="30"><path d="M3.500.5h19l5 6v22h-25V14z" fill="#c4c4c4" stroke="#444"/><path d="M9 5h5v5H9zM11.500 0v14M4 7.500h20" fill="none" stroke="#fff"/><path d="M2.500 14L27 22v7H2.500z" fill="#eee" stroke="#777"/><path d="M5 27v-4h1.500q2 0 2 2t-2 2zM11 23l1 4 1.500-4 1.500 4 1-4M22 23.500q-3.500-1-3.500 1.500 0 2.500 3.500 1.800V25" fill="none" stroke="#555"/></svg><p><b>Export to DWG</b>Export the file into DWG file format.</p></li>
        <li><svg width="32" height="30"><circle cx="12" cy="14" r="11.500" fill="#2390d6"/><circle cx="9" cy="9" r="5" fill="#9fd8f8" opacity=".7"/><path d="M7 4c-3 7-1 15 3 21" fill="none" stroke="#d8281c" stroke-width="2"/><path d="M2 9c7-4 14-1 20 9M1 17c8 4 16-1 20-8" fill="none" stroke="#f0b41c" stroke-width="1.800"/></svg><p><b>Export to DWF</b>Export the file into DWF file format.</p></li>
        <li class="r64"><svg width="32" height="32"><circle cx="10" cy="10" r="9.500" fill="#4ba0c8"/><path d="M6 2c-3 6-1 10 2 17" fill="none" stroke="#d8281c" stroke-width="2.400"/><path d="M1 7c6-3 12-1 18 5M3 16c8 1 10-4 12-12" fill="none" stroke="#f0b41c" stroke-width="2.200"/><path d="M8.500 14.500h21v15h-21z" fill="#e6e8f0" stroke="#333b48"/><path d="M9 15l10 8 10-8M9 29l7-8M29 29l-7-8" fill="none" stroke="#333b48"/></svg><p><b>Send DWF</b>Run the default email application with<br>the DWF file attached in it.</p></li>
      </ul>
    </div>
  </div>
</section>
</main>
</body>
</html>
```

FILE: styles.css
```css
* { box-sizing: border-box; }
body { margin: 0; background: #000; font: 11px/16px "Open Sans", "Noto Sans", sans-serif; color: #111; }
button, input, select { font: inherit; color: inherit; margin: 0; padding: 0; border: 0; background: none; border-radius: 0; }
button { display: flex; align-items: center; justify-content: center; white-space: nowrap; }
a { color: inherit; text-decoration: none; }
h2, h3, p, ul { margin: 0; padding: 0; font: inherit; list-style: none; }
svg { flex: none; display: block; }
.defs { position: absolute; width: 0; height: 0; }

.desktop { display: grid; grid-template-columns: 1603fr 1917fr; min-height: 100vh; }

/* left monitor */
.screen-left { display: flex; flex-direction: column; padding-top: 109px; background: #000; min-width: 0; }
.browser { height: 860px; display: flex; flex-direction: column; border-left: 3px solid #e6e6e6; color: #222; }
.chrome-top { background: #20223f; }
.menurow { display: flex; justify-content: space-between; height: 29px; padding: 1px 0 0 6px; color: #a9a9b4; }
.menubar { display: flex; gap: 11px; font-size: 12px; line-height: 17px; }
.winbtns { display: flex; height: 28px; }
.winbtns button { width: 46px; color: #8d8ea0; }
.tabrow { display: flex; height: 32px; border-bottom: 1px solid #151732; }
.tab { display: flex; align-items: center; width: 224px; height: 32px; padding: 0 10px 0 8px; background: #f9f9fa; border-top: 2px solid #0a84ff; color: #333; }
.tab-title { width: 168px; margin: 0 3px 0 7px; white-space: nowrap; -webkit-mask-image: linear-gradient(90deg, #000 85%, transparent); mask-image: linear-gradient(90deg, #000 85%, transparent); }
.newtab { width: 34px; }
.toolbar { display: flex; align-items: center; gap: 4px; height: 40px; padding-left: 3px; background: #f9f9fa; }
.toolbar > button { width: 28px; height: 28px; }
.toolbar > .back { width: 34px; height: 34px; border: 1px solid #aaa; border-radius: 50%; background: #fff; }
.urlbar { display: flex; align-items: center; flex: 1; gap: 12px; height: 30px; margin: 0 112px; padding: 0 7px 0 8px; background: #fff; border: 1px solid #b8b8ba; border-radius: 2px; font-size: 13px; }
.urlbar .lock { margin-left: -5px; }
.ident { margin-left: -5px; padding-right: 8px; color: #0a8420; white-space: nowrap; border-right: 1px solid #8ad08a; line-height: 22px; }
.url { flex: 1; min-width: 0; margin-left: -2px; color: #77777a; background: linear-gradient(90deg, #77777a 90px, #0c0c0d 90px, #0c0c0d 174px, #77777a 174px); -webkit-background-clip: text; background-clip: text; -webkit-text-fill-color: transparent; }
.toolend { display: flex; height: 34px; }
.toolend button { width: 32px; }
.toolend .hamb { width: 40px; border-left: 1px solid #ddd; }
.bookmarks { display: flex; align-items: center; gap: 8px; height: 23px; padding: 0 0 2px 12px; background: #f9f9fa; border-bottom: 1px solid #ccc; color: #111; font-size: 12px; }
.bookmarks a { display: flex; align-items: center; gap: 4px; white-space: nowrap; }

.page { position: relative; flex: 1; display: flex; flex-direction: column; background: #808080; color: #2c2c2c; }
.site-head { display: flex; justify-content: space-between; align-items: center; height: 37px; padding: 0 159px 2px 175px; background: #7b7b7b; }
.brand { display: flex; align-items: center; gap: 4px; color: #0a0a0a; font: 13px/16px Lato, sans-serif; }
.site-user { display: flex; align-items: center; gap: 24px; font-size: 14px; }
.user, .lang { display: flex; align-items: center; gap: 10px; }
.lang { gap: 4px; padding: 8px 16px 8px 6px; margin-left: -6px; background: #767676; }
.lang .tri { margin-left: 8px; }
.site-band { height: 56px; background: #363836; border-bottom: 1px solid #2c2d2c; box-shadow: 0 1px 4px #555; }
.site-body { flex: 1; margin: 0 495px 0 175px; border: solid #6c6c6c; border-width: 0 1px; }
.modal { position: absolute; inset: 37px 72px 49px; display: flex; flex-direction: column; background: #fff; }
.modal-head { display: flex; align-items: center; height: 62px; border-bottom: 1px solid #ccc; color: #58595b; font-size: 16px; }
.modal-head h2 { display: flex; align-items: center; gap: 9px; flex: 1; padding-left: 20px; font-size: 16px; }
.modal-head > button { height: 60px; border-left: 1px solid #ccc; }
.modetabs { display: flex; height: 41px; margin-right: 20px; padding-left: 5px; background: #f7f7f7; border-radius: 4px; }
.modetabs button { padding: 0 25px; }
.modetabs .on { padding: 0 13px; margin-right: 4px; background: #0696d7; color: #fff; border-radius: 3px; font-weight: 600; }
.modal-head .album { width: 241px; gap: 6px; padding-right: 8px; font-size: 14px; font-weight: 600; }
.modal-head .close { width: 62px; padding: 8px 0 0 3px; }
.modal-main { flex: 1; display: flex; }
.dropwrap { flex: 1; padding: 15px; background: #a0a0a0; }
.dropzone { height: 100%; display: flex; flex-direction: column; align-items: center; padding-top: 196px; border: 2px dashed #777; border-radius: 3px; color: #5c5c5c; }
.dropzone p { margin: 14px 0 13px; font-size: 20px; line-height: 28px; }
.choose, .done { height: 40px; padding-bottom: 3px; border-radius: 3px; font-size: 14px; font-weight: 600; }
.choose { width: 136px; background: #e8e8e8; color: #333; }
.modal-side { display: flex; align-items: flex-end; justify-content: center; width: 303px; padding-bottom: 20px; }
.done { width: 120px; background: #d1dcee; color: #fff; }
.wallpaper { width: 100%; height: 40px; padding-left: 3px; }
.wallmark { font: 30px Inter, sans-serif; fill: #b9a5e0; }

/* right monitor */
.inventor { position: relative; display: flex; flex-direction: column; min-width: 0; background: #525252; }
.titlebar { display: flex; justify-content: space-between; height: 26px; padding-bottom: 4px; color: #d6d6d6; background: repeating-linear-gradient(135deg, #525252 0 4px, #585858 4px 5px); }
.qat { display: flex; align-items: center; padding-left: 3px; }
.q { width: 24px; height: 22px; gap: 4px; justify-content: flex-start; }
.q.more { width: 36px; }
.q.last { width: 20px; }
.q.dim { color: #888; }
.q.logo { position: relative; width: 30px; padding-left: 2px; }
.q.logo span { position: absolute; left: 2px; top: 14px; font: bold 7px/10px "Liberation Sans", sans-serif; color: #c8823a; }
.appearance { width: 101px; height: 22px; padding-left: 4px; background: #8b8b8b; color: #6c6c6c; font-style: italic; font-size: 12px; opacity: 1; }
.q.plus { padding-left: 4px; width: 27px; }
.q.cust { width: 16px; }
.doc-title { display: flex; align-items: center; gap: 12px; }
.infocenter { display: flex; align-items: center; gap: 5px; }
.infocenter input { width: 180px; height: 19px; padding: 0 5px; background: #949494; }
.infocenter input::placeholder { color: #e0e0e0; opacity: 1; }
.signin { display: flex; align-items: center; gap: 5px; }
.signcaret { margin-left: 40px; }
.infocenter > button { margin-left: 6px; }
.vsep { width: 1px; height: 17px; margin-left: 5px; background: #888; }
.infocenter .helpq { width: 16px; height: 16px; border-radius: 50%; background: #fff; color: #1b4fb0; font-weight: bold; font-size: 12px; }
.appwin { display: flex; gap: 12px; margin-left: 20px; padding-right: 4px; }
.ribbontabs { display: flex; height: 20px; color: #d0d0d0; }
.ribbontabs button { padding: 0 11px 0 10px; }
.ribbontabs .file { width: 44px; margin-right: 3px; background: #a58f7f; color: #fff; }
.ribbontabs .on { width: 84px; background: #f6f6f6; color: #444; }
.ribbontabs .mini { margin-left: 12px; }
.ribbon { display: flex; height: 94px; padding-left: 405px; background: #f6f6f6; color: #333; }
.group { display: flex; flex-direction: column; justify-content: space-between; padding: 6px 6px 1px; }
.group.draw { width: 87px; align-items: center; border-right: 1px solid #ddd; }
.tools { display: flex; gap: 5px; }
.tools button { flex-direction: column; justify-content: flex-start; gap: 4px; line-height: 15px; }
.tools button:disabled { color: #b4b4b4; }
.group h3 { text-align: center; }
.work { flex: 1; display: flex; min-height: 0; }
.docks { flex: 1; display: flex; flex-direction: column; min-width: 0; }
.upper { flex: 1; display: flex; }
.browserpanel { width: 242px; margin-right: 4px; background: #fff; }
.docarea { flex: 1; display: flex; flex-direction: column; min-width: 0; }
.viewport { position: relative; flex: 1; overflow: hidden; background: linear-gradient(transparent 62%, #b4b7bf 86%, #c8c9cd 100%), radial-gradient(ellipse 900px 750px at 47% 55%, #a0abc2 0%, #9aa5bc 35%, #8090ab 55%, #6b778e 67%, #535d6e 79%, #4b5362 88%, #323947 100%); }
.model { position: absolute; inset: 0; width: 100%; height: 100%; }
.cubetext { font: bold 11px "Liberation Sans", sans-serif; fill: #63666c; }
.axistext { font: bold 8px "Liberation Sans", sans-serif; }
.viewwin { position: absolute; right: 1px; top: 5px; display: flex; gap: 5px; }
.navbar { position: absolute; right: 1px; top: 146px; padding: 2px 1px; background: #80848e; border: 1px solid #3d4350; border-radius: 5px; }
.doctabs { display: flex; align-items: center; height: 24px; padding-left: 4px; background: #606060; color: #d4d4d4; }
.doctabs button { width: 24px; height: 24px; justify-content: flex-start; }
.doctabs .up { width: 20px; }
.doctabs .dt { width: 72px; justify-content: center; border-left: 1px solid #8a8a8a; }
.doctabs .dt.on { width: 106px; gap: 8px; background: #f5f5f5; color: #555; }
.story { border-top: 4px solid #525252; background: #f2f2f2; }
.panelbar { display: flex; height: 24px; background: #606060; color: #eee; }
.ptab { gap: 5px; padding: 0 4px; background: #fff; color: #555; }
.padd { width: 20px; }
.pmenu { margin-left: auto; padding-right: 5px; }
.player { display: flex; justify-content: space-between; align-items: flex-end; height: 39px; border-bottom: 1px solid #777; }
.sbtabs { display: flex; align-items: flex-end; gap: 2px; width: 116px; }
.sb { width: 72px; height: 25px; flex: none; border: 1px solid #5b74b0; border-top-width: 3px; border-bottom: 0; background: #fff; color: #000; }
.sbadd { width: 22px; height: 17px; background: #858585; border: 1px solid #555; }
.transport { display: flex; gap: 32px; padding: 0 38px 13px 0; }
.transport .end { margin-left: -14px; }
.zoomer { display: flex; align-items: center; gap: 5px; width: 116px; height: 22px; padding-left: 4px; background: #cdcdcd; }
.zoomer input { width: 40px; height: 14px; min-width: 0; appearance: none; background: linear-gradient(#fff, #fff) center / 100% 2px no-repeat; }
.zoomer input::-webkit-slider-thumb { appearance: none; width: 11px; height: 14px; background: #eee; border: 1px solid #555; border-radius: 2px; }
.zoomer i { width: 1px; height: 16px; background: #777; }
.timeline { display: flex; height: 47px; background: #f7f7f7; }
.timeval { width: 181px; display: flex; align-items: center; justify-content: center; border-left: 1px solid #777; }
.hatch { width: 20px; padding: 3px 1px 0; border: solid #ddd; border-width: 0 1px; background: repeating-linear-gradient(135deg, #f7f7f7 0 6px, #ddd 6px 7px); }
.track { flex: 1; min-width: 0; display: flex; flex-direction: column; justify-content: space-between; }
.ruler { display: flex; height: 31px; margin-left: 3px; overflow: hidden; background: repeating-linear-gradient(90deg, transparent 0 20px, #999 20px 21px, transparent 21px 40px) 0 0 / 100% 11px no-repeat, repeating-linear-gradient(90deg, #a9a9a9 0 1px, transparent 1px 4px) 0 0 / 100% 6px no-repeat, linear-gradient(#63cc31, #63cc31) 0 0 / 100% 5px no-repeat, #fff; }
.ruler span { flex: none; width: 40px; height: 16px; padding: 4px 0 0 1px; border-left: 1px solid #000; font: 10px/14px "Liberation Sans", sans-serif; color: #555; }
.hscroll { display: flex; align-items: center; justify-content: space-between; height: 12px; padding: 0 4px; background: #c9c9c9; }
.hscroll i { flex: 0 0 63%; height: 10px; margin: 0 auto 0 5px; background: #b9b9b9; border: 1px solid #999; border-radius: 2px; }
.vscroll { width: 12px; height: 35px; background: #cdcdcd; }
.snapshots { width: 231px; border-left: 4px solid #525252; background: #fff; display: flex; flex-direction: column; }
.snapshots p { margin: auto 0; padding-left: 20px; font: 16px/19px "Liberation Sans", Arial, sans-serif; color: #aaa; white-space: nowrap; }
.status { display: flex; align-items: center; height: 24px; background: #f5f5f5; color: #000; padding-left: 1px; }
.status span:first-child { flex: 1; }
.num { width: 38px; height: 20px; padding-left: 9px; border-left: 1px solid #ddd; line-height: 20px; }

.taskbar { display: flex; height: 40px; background: linear-gradient(90deg, #1c1c1a 0%, #1f2022 20%, #2f3236 32%, #303236 44%, #17181c 48%, #080808 53%, #2a1117 58%, #2f3338 63%, #252a33 68%, #301219 74%, #0a0808 79%, #080909 90%, #1c1f22 98%); color: #fff; }
.start { width: 48px; }
.search { display: flex; align-items: center; gap: 9px; width: 344px; padding: 0 15px 0 9px; background: #f2f2f2; }
.search input { flex: 1; font-size: 14px; }
.search input::placeholder { color: #333; opacity: 1; }
.app { width: 49px; border-bottom: 2px solid transparent; border-top: 2px solid transparent; }
.app.open { border-bottom: 0; background: linear-gradient(#f7a8b2, #f7a8b2) center bottom / 40px 2px no-repeat; padding-bottom: 2px; }
.app.active { background: linear-gradient(#f7a8b2, #f7a8b2) bottom / 100% 2px no-repeat, #55565a; }
.tray { display: flex; align-items: center; gap: 9px; margin-left: auto; padding-right: 12px; }
.tray > svg:first-child { margin-right: 17px; }
.tray > svg:nth-child(2) { margin-right: 11px; }
.tray time { width: 56px; text-align: center; line-height: 18px; }
.notif { position: relative; width: 28px; margin-left: 5px; }
.notif b { position: absolute; left: 8px; top: 7px; width: 16px; height: 16px; border: 1px solid #999; border-radius: 50%; background: #333; font-size: 10px; line-height: 14px; text-align: center; }

/* application menu lies over the ribbon and the document area */
.appmenu { position: absolute; left: 0; top: 46px; width: 424px; height: 576px; display: flex; background: #f1f1f1; border: 1px solid #999; color: #222; }
.appmenu-left { width: 142px; background: #d8d8d8; border-right: 1px solid #e8e8e8; }
.recent { display: flex; justify-content: flex-end; height: 39px; padding: 7px 7px 0 0; }
.recent button { width: 22px; height: 22px; border: 1px solid #999; margin-left: -1px; }
.appmenu-left li { height: 46px; padding-left: 1px; }
.appmenu-left li button { width: 100%; height: 46px; padding: 0 14px 0 16px; gap: 7px; justify-content: flex-start; }
.appmenu-left i { margin-left: auto; border: solid transparent; border-width: 4px 0 4px 4px; border-left-color: #333; }
.appmenu-left .on button { background: #b5d5f3; border: 1px solid #0a62c0; padding-left: 15px; }
.appmenu-left .rule { height: 49px; padding-top: 3px; background: linear-gradient(#aaa, #aaa) 11px 0 / 100% 1px no-repeat; }
.appmenu-right { flex: 1; display: flex; flex-direction: column; justify-content: flex-end; }
.menu-actions { display: flex; justify-content: space-between; padding: 0 5px 11px 10px; }
.menu-actions button { height: 23px; padding: 0 4px; border: 1px solid #888; color: #000; }
.mscroll { display: flex; align-items: center; justify-content: space-between; height: 18px; padding: 0 6px 0 8px; }
.mscroll i { width: 122px; height: 17px; margin: 0 auto 0 4px; background: #cdcdcd; }
.submenu { position: absolute; left: 138px; top: 7px; width: 274px; height: 499px; padding: 0 10px; background: #fff; border: 1px solid #0a62c0; box-shadow: 1px 2px 4px #aaa; }
.submenu h2 { height: 34px; line-height: 34px; margin-bottom: 4px; border-bottom: 1px solid #ccc; font-weight: bold; color: #000; }
.submenu li { display: flex; align-items: center; gap: 10px; height: 54px; padding-left: 6px; line-height: 13px; white-space: nowrap; }
.submenu b { display: block; margin-bottom: 3px; }
.submenu .off { color: #777; }
.submenu .off svg { filter: grayscale(1); opacity: .6; }
.submenu .r58 { height: 58px; }
.submenu .r74 { height: 74px; }
.submenu .r64 { height: 64px; }
.submenu .r58 b, .submenu .r74 b, .submenu .r64 b { margin: 0; }
```
